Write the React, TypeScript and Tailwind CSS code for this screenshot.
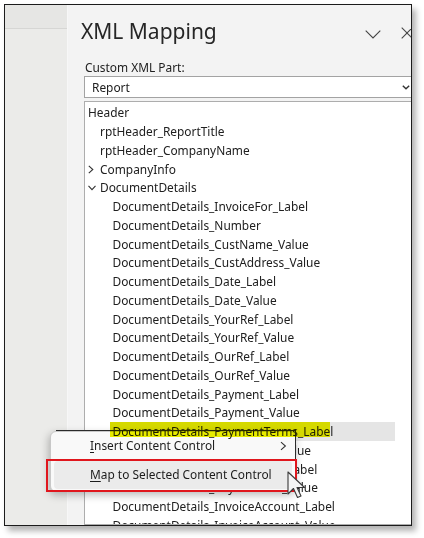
import React from "react";

type Row = { text: string; level: number; chev?: "right" | "down"; selected?: boolean };

const rows: Row[] = [
  { text: "Header", level: 0 },
  { text: "rptHeader_ReportTitle", level: 1 },
  { text: "rptHeader_CompanyName", level: 1 },
  { text: "CompanyInfo", level: 1, chev: "right" },
  { text: "DocumentDetails", level: 1, chev: "down" },
  { text: "DocumentDetails_InvoiceFor_Label", level: 2 },
  { text: "DocumentDetails_Number", level: 2 },
  { text: "DocumentDetails_CustName_Value", level: 2 },
  { text: "DocumentDetails_CustAddress_Value", level: 2 },
  { text: "DocumentDetails_Date_Label", level: 2 },
  { text: "DocumentDetails_Date_Value", level: 2 },
  { text: "DocumentDetails_YourRef_Label", level: 2 },
  { text: "DocumentDetails_YourRef_Value", level: 2 },
  { text: "DocumentDetails_OurRef_Label", level: 2 },
  { text: "DocumentDetails_OurRef_Value", level: 2 },
  { text: "DocumentDetails_Payment_Label", level: 2 },
  { text: "DocumentDetails_Payment_Value", level: 2 },
  { text: "DocumentDetails_PaymentTerms_Label", level: 2, selected: true },
  { text: "DocumentDetails_PaymentId_Value", level: 2 },
  { text: "DocumentDetails_PaymentRef_Label", level: 2 },
  { text: "DocumentDetails_PaymentRef_Value", level: 2 },
  { text: "DocumentDetails_InvoiceAccount_Label", level: 2 },
  { text: "DocumentDetails_InvoiceAccount_Value", level: 2 },
];

function TreeRow({ row }: { row: Row }) {
  if (row.level === 0) {
    return <div className="h-[18.75px] leading-[18.75px] pl-[3px] whitespace-nowrap">{row.text}</div>;
  }
  if (row.level === 1) {
    return (
      <div className="h-[18.75px] leading-[18.75px] pl-[3px] flex items-center whitespace-nowrap">
        <span className="w-[12px] h-[18.75px] flex items-center">
          {row.chev === "right" && (
            <svg width="6" height="9" viewBox="0 0 6 9" className="mt-[1px]">
              <polyline points="0.8,0.8 4.8,4.5 0.8,8.2" fill="none" stroke="#333" strokeWidth="1.1" />
            </svg>
          )}
          {row.chev === "down" && (
            <svg width="8" height="6" viewBox="0 0 8 6" className="mt-[1px]">
              <polyline points="0.5,0.8 4,4.6 7.5,0.8" fill="none" stroke="#333" strokeWidth="1.1" />
            </svg>
          )}
        </span>
        <span>{row.text}</span>
      </div>
    );
  }
  if (row.selected) {
    return (
      <div className="h-[18.75px] leading-[18.75px] ml-[24.5px] w-[285px] bg-[#e5e5e5] pl-[3px] whitespace-nowrap">
        <span className="relative z-10">{row.text}</span>
      </div>
    );
  }
  return <div className="h-[18.75px] leading-[18.75px] pl-[27.5px] whitespace-nowrap">{row.text}</div>;
}

export default function App() {
  return (
    <div className="w-[424px] h-[538px] bg-white relative overflow-hidden font-['Noto_Sans',sans-serif] text-[11.9px] text-[#202020]">
      {/* window frame */}
      <div className="ml-[4px] mt-[4px] w-[408px] h-[521.5px] border-[1.5px] border-[#1c1c1c] shadow-[4px_5px_6px_rgba(0,0,0,0.3)] flex overflow-hidden">
        {/* left strip */}
        <div className="w-[61.5px] flex flex-col shrink-0">
          <div className="h-[23.5px] bg-[#e6e6e4] border-b border-[#d6d6d4]" />
          <div className="flex-1 bg-[#ebebe9]" />
        </div>
        <div className="w-[1.5px] bg-[#f7f7f7] shrink-0" />
        {/* pane */}
        <div className="flex-1 bg-[#f3f3f3] overflow-hidden">
          <div className="w-[360px] h-full flex flex-col pt-[11.5px]">
            <div className="flex items-start h-[28px] pl-[13px]">
              <span className="w-[283.5px] text-[21px] leading-[28px] text-[#262626] whitespace-nowrap">XML Mapping</span>
              <svg width="16" height="9" viewBox="0 0 16 9" className="mt-[13px]">
                <polyline points="0.7,0.7 8,8 15.3,0.7" fill="none" stroke="#444" strokeWidth="1.1" />
              </svg>
              <svg width="12" height="12" viewBox="0 0 12 12" className="mt-[10.5px] ml-[20.5px]">
                <line x1="0.7" y1="0.7" x2="11.3" y2="11.3" stroke="#444" strokeWidth="1.1" />
                <line x1="11.3" y1="0.7" x2="0.7" y2="11.3" stroke="#444" strokeWidth="1.1" />
              </svg>
            </div>
            <div className="mt-[14.3px] pl-[17px] h-[16px] leading-[16px] whitespace-nowrap">Custom XML Part:</div>
            <div className="mt-[1.7px] ml-[16px] w-[340px] h-[22px] border border-[#a3a3a3] bg-white flex items-center pl-[7px] shrink-0">
              <span className="w-[310px]">Report</span>
              <svg width="8" height="5" viewBox="0 0 8 5">
                <polyline points="0.8,0.8 4,3.8 7.2,0.8" fill="none" stroke="#333" strokeWidth="1.4" />
              </svg>
            </div>
            <div className="mt-[3px] ml-[16px] w-[340px] flex-1 border border-[#adadad] bg-white overflow-hidden pt-[1px]">
              {rows.map((r, i) => (
                <TreeRow key={i} row={r} />
              ))}
            </div>
          </div>
        </div>
      </div>

      {/* context menu */}
      <div className="absolute left-[50px] top-[431px] w-[246px] h-[60.5px] rounded-[6px] bg-[#f9f9f9] border border-[#c8c8c8] shadow-[-1px_3px_8px_rgba(0,0,0,0.28)] flex flex-col">
        <div className="h-[27.5px] flex items-center pl-[39px] pr-[8px] whitespace-nowrap text-[#1c1c1c]">
          <span className="w-[193px]">
            <span className="underline underline-offset-2">I</span>nsert Content Control
          </span>
          <svg width="7" height="10" viewBox="0 0 7 10">
            <polyline points="1,1 5.5,5 1,9" fill="none" stroke="#333" strokeWidth="1.1" />
          </svg>
        </div>
        <div className="mt-[1px] mx-[3px] h-[28px] rounded-[4px] bg-[#ebebeb] flex items-center pl-[36px] whitespace-nowrap text-[#1c1c1c]">
          <span>
            <span className="underline underline-offset-2">M</span>ap to Selected Content Control
          </span>
        </div>
      </div>

      {/* dark edge line across menu top and right */}
      <div className="absolute z-20 left-[56px] top-[429.5px] w-[240px] h-[1.5px] bg-[#2b2b2b]" />
      <div className="absolute z-20 left-[294.5px] top-[429.5px] w-[1.5px] h-[29px] bg-[#2b2b2b]" />

      {/* red annotation box */}
      <div className="absolute z-20 left-[46px] top-[459px] w-[251px] h-[32.5px] border-2 border-[#e0161d]" />

      {/* yellow highlighter */}
      <div className="absolute z-20 left-[110px] top-[422px] w-[220px] h-[15px] bg-[#eef200] mix-blend-multiply" />

      {/* mouse cursor */}
      <svg className="absolute z-30 left-[287px] top-[471px]" width="20" height="30" viewBox="0 0 20 30">
        <path
          d="M1,1 L1,23 L6.5,17.5 L10.5,26.5 L14,25 L10,16.5 L17.5,16.5 Z"
          fill="#f4f4f4"
          stroke="#3a3a3a"
          strokeWidth="1.1"
          strokeLinejoin="round"
        />
      </svg>
    </div>
  );
}
